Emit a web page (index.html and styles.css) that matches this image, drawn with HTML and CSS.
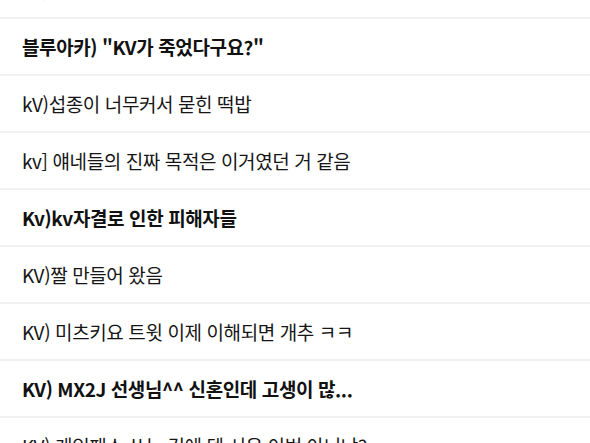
FILE: index.html
```html
<!DOCTYPE html>
<html lang="ko">
<head>
    <meta charset="UTF-8">
    <meta name="viewport" content="width=device-width, initial-scale=1.0">
    <title>게시글 목록</title>
    <link rel="stylesheet" href="styles.css">
</head>
<body>
    <ul class="post-list">
        <li class="post">kv) 오늘 뽑기 결과 공유합니다 ㅋㅋ</li>
        <li class="post bold">블루아카) "KV가 죽었다구요?"</li>
        <li class="post">kV)섭종이 너무커서 묻힌 떡밥</li>
        <li class="post">kv] 얘네들의 진짜 목적은 이거였던 거 같음</li>
        <li class="post bold">Kv)kv자결로 인한 피해자들</li>
        <li class="post">KV)짤 만들어 왔음</li>
        <li class="post">KV) 미츠키요 트윗 이제 이해되면 개추 ㅋㅋ</li>
        <li class="post bold">KV) MX2J 선생님^^ 신혼인데 고생이 많...</li>
        <li class="post">KV) 게임패스 쓰는 김에 텐 서운 이번 아니냐?</li>
    </ul>
</body>
</html>
```

FILE: styles.css
```css
* {
    margin: 0;
    padding: 0;
    box-sizing: border-box;
}

html, body {
    background: #fff;
    overflow: hidden;
}

body {
    font-family: "Noto Sans CJK KR", "Noto Sans", sans-serif;
    color: #161616;
}

/* 목록은 스크롤된 상태라 첫 줄이 위로 살짝 가려짐 */
.post-list {
    list-style: none;
    margin-top: -38px;
}

.post {
    display: flex;
    align-items: center;
    height: 57px;
    padding: 0 22px;
    border-bottom: 2px solid #f1f1f1;
    font-size: 19px;
    white-space: nowrap;
    letter-spacing: -0.4px;
}

.post.bold {
    font-weight: 700;
    color: #111;
}
```
